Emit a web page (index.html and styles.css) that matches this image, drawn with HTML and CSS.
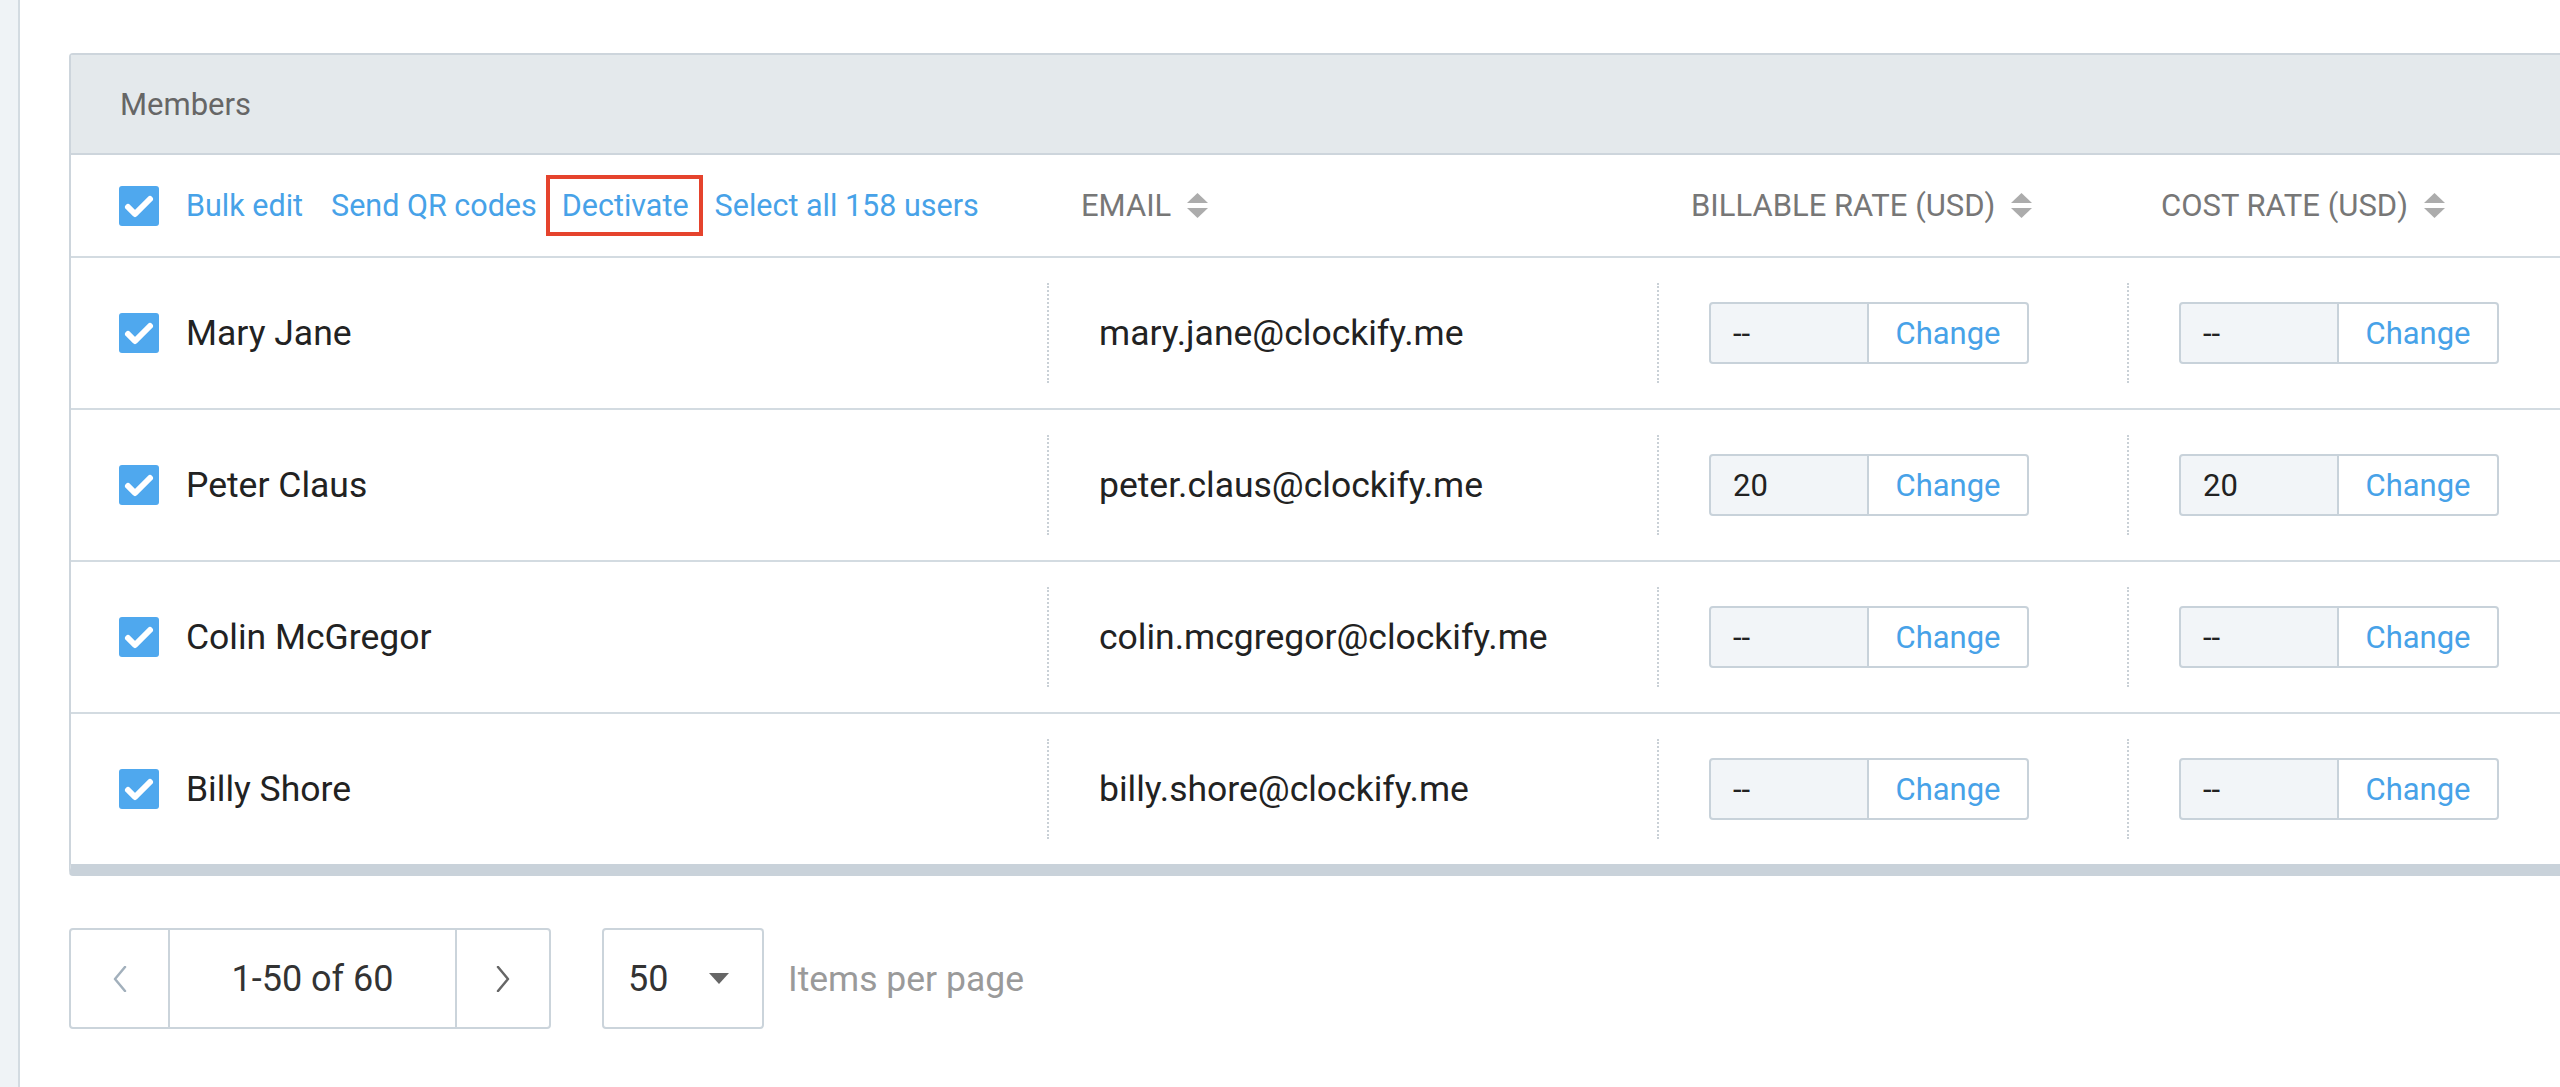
FILE: index.html
```html
<!DOCTYPE html>
<html lang="en">
<head>
    <meta charset="UTF-8">
    <meta name="viewport" content="width=device-width, initial-scale=1.0">
    <title>Members</title>
    <link rel="stylesheet" href="styles.css">
</head>
<body>
    <div class="app">
        <aside class="sidebar"></aside>
        <main class="main">
            <section class="card">
                <div class="card-title">Members</div>

                <div class="row row-head">
                    <div class="name-cell">
                        <svg class="check" viewBox="0 0 40 40"><rect width="40" height="40" rx="3"/><path d="M9 21 L16 28 L31 13"/></svg>
                        <div class="actions">
                            <a href="#">Bulk edit</a>
                            <a href="#">Send QR codes</a>
                            <a href="#" class="highlight">Dectivate</a>
                            <a href="#">Select all 158 users</a>
                        </div>
                    </div>
                    <div class="col-head">EMAIL
                        <svg class="sort" viewBox="0 0 21 25"><path d="M10.5 0 L21 10 L0 10 Z"/><path d="M0 15 L21 15 L10.5 25 Z"/></svg>
                    </div>
                    <div class="col-head">BILLABLE RATE (USD)
                        <svg class="sort" viewBox="0 0 21 25"><path d="M10.5 0 L21 10 L0 10 Z"/><path d="M0 15 L21 15 L10.5 25 Z"/></svg>
                    </div>
                    <div class="col-head">COST RATE (USD)
                        <svg class="sort" viewBox="0 0 21 25"><path d="M10.5 0 L21 10 L0 10 Z"/><path d="M0 15 L21 15 L10.5 25 Z"/></svg>
                    </div>
                </div>

                <div class="row">
                    <div class="name-cell">
                        <svg class="check" viewBox="0 0 40 40"><rect width="40" height="40" rx="3"/><path d="M9 21 L16 28 L31 13"/></svg>
                        <span class="name">Mary Jane</span>
                    </div>
                    <div class="cell">mary.jane@clockify.me</div>
                    <div class="cell"><div class="rate"><span class="rate-value">--</span><button class="rate-btn">Change</button></div></div>
                    <div class="cell"><div class="rate"><span class="rate-value">--</span><button class="rate-btn">Change</button></div></div>
                </div>

                <div class="row">
                    <div class="name-cell">
                        <svg class="check" viewBox="0 0 40 40"><rect width="40" height="40" rx="3"/><path d="M9 21 L16 28 L31 13"/></svg>
                        <span class="name">Peter Claus</span>
                    </div>
                    <div class="cell">peter.claus@clockify.me</div>
                    <div class="cell"><div class="rate"><span class="rate-value">20</span><button class="rate-btn">Change</button></div></div>
                    <div class="cell"><div class="rate"><span class="rate-value">20</span><button class="rate-btn">Change</button></div></div>
                </div>

                <div class="row">
                    <div class="name-cell">
                        <svg class="check" viewBox="0 0 40 40"><rect width="40" height="40" rx="3"/><path d="M9 21 L16 28 L31 13"/></svg>
                        <span class="name">Colin McGregor</span>
                    </div>
                    <div class="cell">colin.mcgregor@clockify.me</div>
                    <div class="cell"><div class="rate"><span class="rate-value">--</span><button class="rate-btn">Change</button></div></div>
                    <div class="cell"><div class="rate"><span class="rate-value">--</span><button class="rate-btn">Change</button></div></div>
                </div>

                <div class="row">
                    <div class="name-cell">
                        <svg class="check" viewBox="0 0 40 40"><rect width="40" height="40" rx="3"/><path d="M9 21 L16 28 L31 13"/></svg>
                        <span class="name">Billy Shore</span>
                    </div>
                    <div class="cell">billy.shore@clockify.me</div>
                    <div class="cell"><div class="rate"><span class="rate-value">--</span><button class="rate-btn">Change</button></div></div>
                    <div class="cell"><div class="rate"><span class="rate-value">--</span><button class="rate-btn">Change</button></div></div>
                </div>
            </section>

            <div class="pager">
                <div class="pages">
                    <button class="page-btn prev">
                        <svg viewBox="0 0 14 26"><path d="M12 1 L2 13 L12 25"/></svg>
                    </button>
                    <span class="page-info">1-50 of 60</span>
                    <button class="page-btn next">
                        <svg viewBox="0 0 14 26"><path d="M2 1 L12 13 L2 25"/></svg>
                    </button>
                </div>
                <div class="per-page">
                    <span>50</span>
                    <svg class="caret" viewBox="0 0 20 11"><path d="M0 0 L20 0 L10 11 Z"/></svg>
                </div>
                <span class="per-page-label">Items per page</span>
            </div>
        </main>
    </div>
</body>
</html>
```

FILE: styles.css
```css
body {
    margin: 0;
    font-family: Roboto, 'Liberation Sans', sans-serif;
    background: #ffffff;
    color: #222222;
    overflow: hidden;
}
.app {
    display: flex;
    height: 100vh;
}
.sidebar {
    width: 18px;
    flex: none;
    background: #eff3f6;
    border-right: 2px solid #d3dbe1;
}
.main {
    flex: 1;
    min-width: 0;
    padding: 53px 0 0 49px;
    overflow: hidden;
}

/* members card */
.card {
    width: 2600px;
    background: #ffffff;
    border: 2px solid #cdd5dc;
    border-bottom: 12px solid #c9d2da;
    border-right: none;
    border-radius: 4px 0 0 4px;
}
.card-title {
    height: 98px;
    display: flex;
    align-items: center;
    padding-left: 49px;
    background: #e4e9ec;
    border-bottom: 2px solid #cdd5dc;
    font-size: 31px;
    color: #666666;
}
.row {
    display: grid;
    grid-template-columns: 976px 610px 470px 470px;
    align-items: center;
    height: 150px;
    border-bottom: 2px solid #d3dbe1;
}
.row:last-child {
    border-bottom: none;
}
.row-head {
    height: 101px;
}
.name-cell {
    display: flex;
    align-items: center;
    padding-left: 48px;
}
.check {
    width: 40px;
    height: 40px;
    flex: none;
    margin-right: 27px;
}
.check rect {
    fill: #4fa8ee;
}
.check path {
    fill: none;
    stroke: #ffffff;
    stroke-width: 6;
    stroke-linecap: round;
    stroke-linejoin: round;
}
.name {
    font-size: 35.5px;
}
.actions {
    display: flex;
    align-items: center;
    gap: 28px;
    font-size: 30.5px;
}
.actions a {
    color: #47a2e8;
    text-decoration: none;
    white-space: nowrap;
}
.actions .highlight {
    line-height: 37px;
    padding: 8px 10px 8px 12px;
    border: 4px solid #e5432d;
    margin: 0 -16px 0 -19px;
}
.col-head {
    display: flex;
    align-items: center;
    padding-left: 34px;
    font-size: 31px;
    color: #777777;
    white-space: nowrap;
}
.sort {
    width: 21px;
    height: 25px;
    margin-left: 16px;
    fill: #acacac;
}
.cell {
    display: flex;
    align-items: center;
    height: 100px;
    padding-left: 50px;
    border-left: 2px dotted #c9d0d6;
    font-size: 35.5px;
}
.rate {
    display: flex;
    height: 62px;
}
.rate-value {
    width: 134px;
    display: flex;
    align-items: center;
    padding-left: 22px;
    background: #f2f5f8;
    border: 2px solid #c8d2da;
    border-radius: 4px 0 0 4px;
    font-size: 31px;
    color: #222222;
}
.rate-btn {
    width: 160px;
    box-sizing: border-box;
    background: #ffffff;
    border: 2px solid #c8d2da;
    border-left: none;
    border-radius: 0 4px 4px 0;
    font-family: inherit;
    font-size: 31px;
    color: #47a2e8;
    padding: 0;
}

/* pagination */
.pager {
    display: flex;
    align-items: center;
    margin-top: 52px;
}
.pages {
    display: flex;
    height: 97px;
    border: 2px solid #cbd4db;
    border-radius: 4px;
}
.page-btn {
    box-sizing: content-box;
    background: none;
    border: none;
    padding: 0;
    display: flex;
    align-items: center;
    justify-content: center;
}
.page-btn svg {
    width: 14px;
    height: 26px;
    fill: none;
    stroke-width: 2.5;
    stroke-linecap: round;
    stroke-linejoin: round;
}
.prev {
    width: 97px;
}
.prev svg {
    stroke: #a2b0bc;
}
.next {
    width: 92px;
    border-left: 2px solid #cbd4db;
}
.next svg {
    stroke: #666666;
}
.page-info {
    width: 285px;
    display: flex;
    align-items: center;
    justify-content: center;
    border-left: 2px solid #cbd4db;
    font-size: 36px;
    color: #333333;
}
.per-page {
    width: 101px;
    height: 97px;
    display: flex;
    align-items: center;
    justify-content: space-between;
    margin-left: 51px;
    padding: 0 33px 0 24px;
    border: 2px solid #cbd4db;
    border-radius: 4px;
    font-size: 36px;
    color: #333333;
}
.caret {
    width: 20px;
    height: 11px;
    fill: #666666;
}
.per-page-label {
    margin-left: 24px;
    font-size: 35.5px;
    color: #9a9a9a;
}
```
